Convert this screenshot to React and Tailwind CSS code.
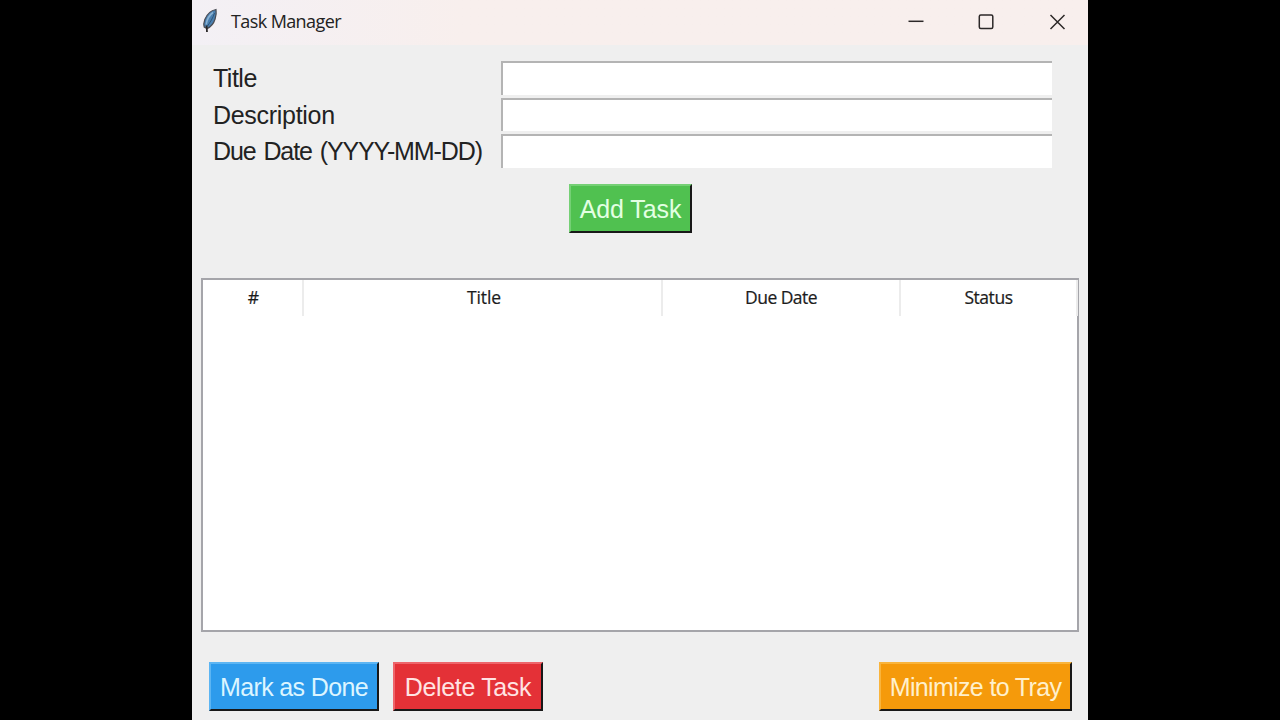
import React from "react";

const fields = [
  { label: "Title", tracking: "tracking-[-0.5px]" },
  { label: "Description", tracking: "tracking-[-0.3px]" },
  { label: "Due Date (YYYY-MM-DD)", tracking: "tracking-[-1.1px] [word-spacing:2px]" },
];

const columns = [
  { name: "#", width: "w-[101px]", text: "pl-[2px]" },
  { name: "Title", width: "w-[359px]", text: "pl-[3px] tracking-[-0.1px]" },
  { name: "Due Date", width: "w-[238px]", text: "tracking-[-0.55px]" },
  { name: "Status", width: "w-[177px]", text: "tracking-[-0.45px]" },
];

function Feather() {
  return (
    <svg width="18" height="26" viewBox="0 0 18 26" className="shrink-0">
      <path d="M15 1.500C10.500 2.300 6 6 3.800 11.500c-1 2.800-1.300 5.500-.6 7.500l2.800 1.600c3.700-1.600 6.700-5 8.100-9.600 1-3.200 1.400-6.500.9-9.500z" fill="#4a7fb0" stroke="#4a4b52" strokeWidth="1.200" />
      <path d="M12 4.500C8.500 7 5.800 11.500 5.200 16.500" fill="none" stroke="#8ab2d3" strokeWidth="1.600" />
      <path d="M13.500 5C12 10 9 14.500 6.500 18" fill="none" stroke="#2f5578" strokeWidth="1" />
      <path d="M5.600 17.500L6 24" fill="none" stroke="#2b2828" strokeWidth="1.800" />
    </svg>
  );
}

function TkButton({ className, children }) {
  return (
    <button
      className={
        "flex h-[49px] items-center justify-center whitespace-nowrap border-2 border-r-[#181818] border-b-[#181818] text-[25px] leading-none " +
        className
      }
    >
      {children}
    </button>
  );
}

export default function App() {
  return (
    <div className="flex h-[720px] w-[1280px] justify-center overflow-hidden bg-black">
      <div className="flex h-[720px] w-[896px] flex-col bg-[#efefef] font-['Liberation_Sans',Arial,sans-serif] text-[#222]">
        <header className="flex h-[45px] shrink-0 items-start bg-linear-to-r from-[#f3f0f5] via-[#f8efed] via-30% to-[#f8efed] pl-[9px]">
          <div className="flex h-[41px] items-center">
            <Feather />
            <span className="ml-3 whitespace-nowrap font-['Open_Sans','Noto_Sans',sans-serif] text-[18px] leading-none tracking-[-0.6px]">
              Task Manager
            </span>
          </div>
          <svg width="162" height="18" viewBox="0 0 162 18" className="mt-[13px] mr-[20px] ml-auto" fill="none" stroke="#2c2828" strokeWidth="1.500">
            <path d="M2.500 8.300h15" />
            <rect x="73.300" y="2" width="13.500" height="13.500" rx="1.500" />
            <path d="M144.500 2l14 14M158.500 2l-14 14" />
          </svg>
        </header>

        <form className="flex shrink-0 flex-col gap-[3px] pt-[16px] pl-[21px]">
          {fields.map((f) => (
            <label key={f.label} className="flex h-[33.500px] items-center">
              <span className={"w-[288px] whitespace-nowrap pt-[2px] text-[25px] leading-none " + f.tracking}>{f.label}</span>
              <input className="h-full w-[551px] border-t-2 border-l-2 border-[#b4b4b4] bg-white outline-none" />
            </label>
          ))}
        </form>

        <div className="mt-[16px] flex shrink-0 pl-[377px]">
          <TkButton className="w-[123px] border-t-[#75d075] border-l-[#75d075] bg-[#50c150] pt-[2px] text-[#e3ffe3] tracking-[-0.1px]">Add Task</TkButton>
        </div>

        <section className="mx-[9px] mt-[45px] h-[354px] shrink-0 border-2 border-[#a5a5aa] bg-white">
          <div className="flex h-[36px] font-['Open_Sans','Noto_Sans',sans-serif] text-[17.500px] text-[#1c1c1c]">
            {columns.map((c) => (
              <div key={c.name} className={"flex shrink-0 items-center justify-center border-r-2 border-[#ececec] pb-px [-webkit-text-stroke:0.2px_#1c1c1c] " + c.text + " " + c.width}>
                {c.name}
              </div>
            ))}
          </div>
        </section>

        <footer className="mt-[30px] flex shrink-0 gap-[14px] pr-[16px] pl-[17px]">
          <TkButton className="w-[170px] border-t-[#5cb5f3] border-l-[#5cb5f3] bg-[#2d9bec] pt-[3px] text-[#dcf5ff] tracking-[-0.65px]">Mark as Done</TkButton>
          <TkButton className="w-[150px] border-t-[#ee656b] border-l-[#ee656b] bg-[#e43137] pt-[3px] text-[#ffe3e3] tracking-[-0.35px]">Delete Task</TkButton>
          <TkButton className="ml-auto w-[193px] border-t-[#f9b43c] border-l-[#f9b43c] bg-[#f59a0b] pt-[3px] text-[#fff0cc] tracking-[-0.65px]">Minimize to Tray</TkButton>
        </footer>
      </div>
    </div>
  );
}
